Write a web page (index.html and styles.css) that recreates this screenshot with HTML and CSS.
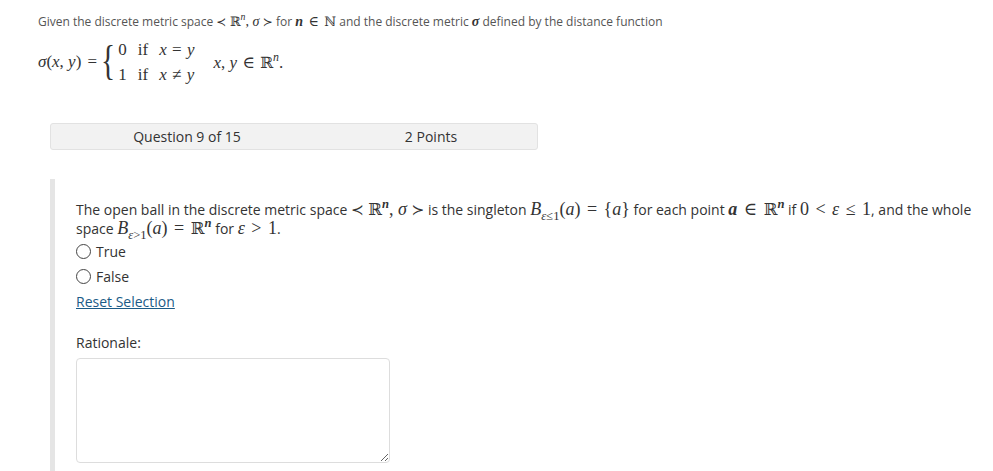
FILE: index.html
```html
<!DOCTYPE html>
<html lang="en">
<head>
    <meta charset="UTF-8">
    <meta name="viewport" content="width=device-width, initial-scale=1.0">
    <title>Question 9 of 15</title>
    <link rel="stylesheet" href="styles.css">
</head>
<body>
    <div class="intro">
        <p class="lead">Given the discrete metric space <span class="m"><span class="prec">&#8826;</span> <b>&#8477;</b><sup><i>n</i></sup>, <i>&sigma;</i> <span class="prec">&#8827;</span></span> for <span class="m"><i class="bi">n</i> <span class="rel">&isin;</span> <b>&#8469;</b></span> and the discrete metric <span class="m"><i class="bi">&sigma;</i></span> defined by the distance function</p>

        <div class="formula m">
            <span class="lhs"><i>&sigma;</i>(<i>x</i>, <i>y</i>) <span class="rel">=</span></span>
            <span class="brace">{</span>
            <span class="cases">
                <span>0</span><span>if</span><span><i>x</i> <span class="rel">=</span> <i>y</i></span>
                <span>1</span><span>if</span><span><i>x</i> <span class="rel">&ne;</span> <i>y</i></span>
            </span>
            <span class="domain"><i>x</i>, <i>y</i> <span class="rel">&isin;</span> <b>&#8477;</b><sup><i>n</i></sup>.</span>
        </div>
    </div>

    <div class="qhead">
        <div>Question 9 of 15</div>
        <div>2 Points</div>
    </div>

    <div class="question">
        <p class="qtext">The open ball in the discrete metric space <span class="m"><span class="prec">&#8826;</span> <b>&#8477;</b><sup><i class="bi">n</i></sup>, <i>&sigma;</i> <span class="prec">&#8827;</span></span> is the singleton <span class="m"><i>B</i><sub><i>&epsilon;</i>&le;1</sub>(<i>a</i>) <span class="rel">=</span> {<i>a</i>}</span> for each point <span class="m"><i class="bi">a</i> <span class="rel">&isin;</span> <b>&#8477;</b><sup><i class="bi">n</i></sup></span> if <span class="m">0 <span class="rel">&lt;</span> <i>&epsilon;</i> <span class="rel">&le;</span> 1</span>, and the whole space <span class="m"><i>B</i><sub><i>&epsilon;</i>&gt;1</sub>(<i>a</i>) <span class="rel">=</span> <b>&#8477;</b><sup><i class="bi">n</i></sup></span> for <span class="m"><i>&epsilon;</i> <span class="rel">&gt;</span> 1</span>.</p>

        <label class="opt"><span class="radio"></span>True</label>
        <label class="opt"><span class="radio"></span>False</label>
        <a class="reset" href="#">Reset Selection</a>

        <div class="rationale">Rationale:</div>
        <textarea class="answer"></textarea>
    </div>
</body>
</html>
```

FILE: styles.css
```css
body { margin: 0; font-family: "Open Sans", Arial, sans-serif; color: #333; background: #fff; }
.m { font-family: "Liberation Serif", "DejaVu Serif", serif; }
.m b { font-family: "DejaVu Serif", serif; font-weight: normal; font-size: 0.92em; }
.m sup, .m sub { font-size: 0.7em; line-height: 0; }
.m .bi { font-weight: bold; }
.prec { font-family: "DejaVu Sans", sans-serif; font-size: 0.85em; }
.rel { margin: 0 2px; }

.intro { padding: 13px 0 0 38px; }
.lead { margin: 0; font-size: 12px; color: #555; }
.lead .m { font-size: 14px; color: #333; }

.formula { display: flex; align-items: center; margin-top: 7px; font-size: 17px; color: #333; }
.lhs { margin-right: 2px; }
.brace { font-size: 42px; transform: scaleX(0.7); line-height: 1; margin: -5px 0 0 -3px; font-weight: lighter; }
.cases { display: grid; grid-template-columns: auto auto auto; column-gap: 11px; line-height: 25px; }
.cases .rel { margin: 0 1px; }
.domain { margin-left: 19px; }
.domain .rel { margin: 0 1px; }

.qhead { display: grid; grid-template-columns: 244px 244px; margin: 36px 0 0 50px; width: 472px; height: 25px;
    padding-left: 14px; background: #f2f2f2; border: 1px solid #e2e2e2; border-radius: 3px;
    font-size: 14px; line-height: 25px; text-align: center; color: #333; }

.question { margin: 29px 0 0 50px; border-left: 5px solid #e5e5e5; padding: 21px 0 8px 21px; }
.qtext { margin: 0; font-size: 14px; line-height: 19px; color: #333; }
.qtext .m { font-size: 18px; line-height: 1; }
.opt { display: flex; align-items: center; gap: 5px; font-size: 14px; height: 25px; }
.opt:first-of-type { margin-top: 1px; }
.radio { width: 13px; height: 13px; border: 1px solid #444; border-radius: 50%; }
.reset { display: block; font-size: 14px; color: #1b5b87; margin-top: 3px; }
.rationale { font-size: 14px; margin-top: 22px; }
.answer { display: block; width: 314px; height: 105px; margin-top: 6px; box-sizing: border-box;
    border: 1px solid #ddd; border-radius: 4px; }
```
